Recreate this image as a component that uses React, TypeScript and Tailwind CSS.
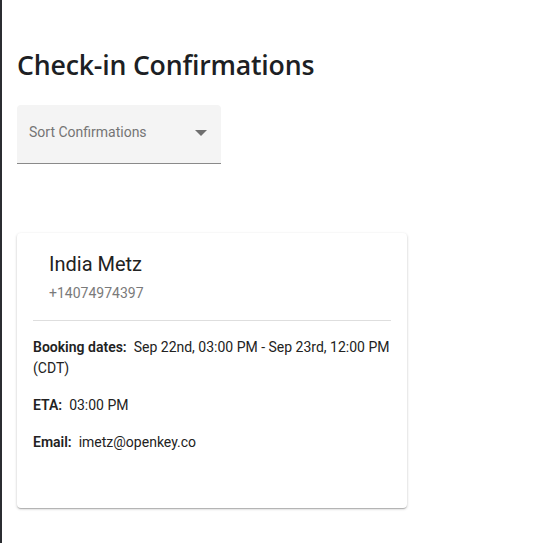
import React from "react";

export default function App() {
  return (
    <div className="min-h-[543px] w-[542px] bg-white border-l-2 border-[#2b2d31] font-['Roboto',sans-serif]">
      <div className="pl-[15px] pt-[47px]">
        <h1 className="font-['Open_Sans',sans-serif] font-semibold text-[26.7px] leading-[36px] text-[#1d1f24] tracking-[-0.2px]">
          Check-in Confirmations
        </h1>
        <div className="mt-[22px] w-[204px] h-[59px] bg-[#f4f4f4] rounded-t-[4px] border-b border-[#8a8a8a] flex items-center justify-between pl-[12px] pr-[14px] pb-[4px]">
          <span className="text-[14px] text-[#757575]">Sort Confirmations</span>
          <svg width="12" height="6" viewBox="0 0 10 5" className="mt-[1px]">
            <path d="M0 0 L5 5 L10 0 Z" fill="#6f6f6f" />
          </svg>
        </div>
        <div className="mt-[69px] w-[390px] h-[275px] bg-white rounded-[4px] shadow-[0_1px_3px_rgba(0,0,0,0.2),0_1px_1px_rgba(0,0,0,0.12),0_2px_1px_-1px_rgba(0,0,0,0.1)] px-[16px] pt-[19px]">
          <div className="pl-[16px]">
            <div className="text-[20px] leading-[24px] text-[#222]">India Metz</div>
            <div className="mt-[8px] text-[14px] leading-[18px] text-[#7a7a7a]">+14074974397</div>
          </div>
          <div className="mt-[18px] h-px bg-[#dedede]" />
          <div className="mt-[16px] text-[14px] leading-[21px] text-[#222]">
            <p>
              <span className="font-semibold mr-[7px]">Booking dates:</span>Sep 22nd, 03:00 PM - Sep 23rd, 12:00 PM (CDT)
            </p>
            <p className="mt-[16px]">
              <span className="font-semibold mr-[7px]">ETA:</span>03:00 PM
            </p>
            <p className="mt-[16px]">
              <span className="font-semibold mr-[7px]">Email:</span>imetz@openkey.co
            </p>
          </div>
        </div>
      </div>
    </div>
  );
}
